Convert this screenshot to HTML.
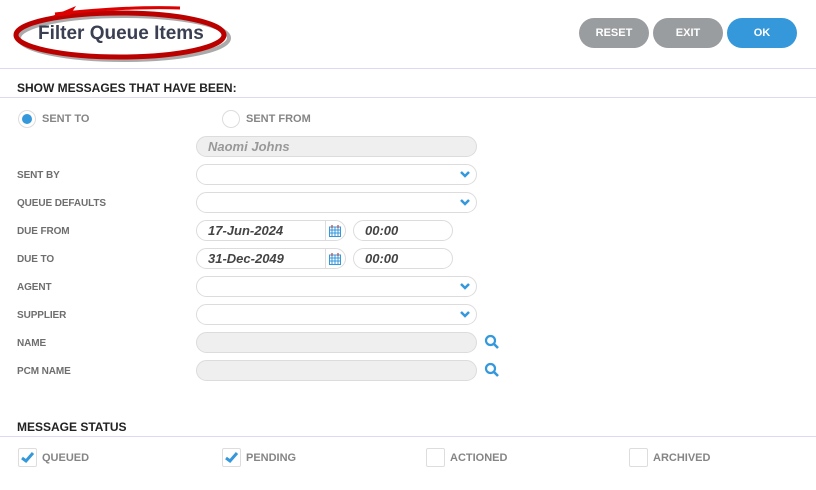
<!DOCTYPE html>
<html><head><meta charset="utf-8"><style>
*{box-sizing:border-box;margin:0;padding:0}
body{width:816px;height:490px;background:#fff;font-family:"Liberation Sans",sans-serif;position:relative;overflow:hidden}
.a{position:absolute}
.lbl{position:absolute;left:17px;font-size:10px;font-weight:bold;color:#6e6e6e;letter-spacing:-0.1px}
.fld{position:absolute;left:196px;width:281px;height:21px;border:1px solid #dcdcdc;border-radius:11px;background:#fff}
.gray{background:#efefef}
.chev{position:absolute;right:6px;top:4px}
.btn{position:absolute;top:18px;height:30px;border-radius:15px;color:#fff;font-size:11px;font-weight:bold;text-align:center;line-height:30px}
.hdr{position:absolute;left:17px;font-size:12px;font-weight:bold;color:#222}
.hl{position:absolute;left:0;width:816px;height:1px;background:#dcdaf0}
.cb{position:absolute;top:448px;width:19px;height:19px;border:1px solid #ddd;border-radius:2px}
.cbl{position:absolute;top:452px;font-size:11px;font-weight:bold;color:#858585}
.it{font-style:italic;font-weight:bold;font-size:13px;color:#444;position:absolute;top:2px;left:11px}
</style></head><body>
<svg class="a" style="left:0;top:0" width="240" height="70">
<ellipse cx="124" cy="38" rx="105" ry="22" fill="none" stroke="#aaa" stroke-width="4"/>
<ellipse cx="120" cy="35" rx="104" ry="22" fill="none" stroke="#b00" stroke-width="5"/>
<path d="M55 14 Q130 6 180 8" stroke="#d00" stroke-width="3" fill="none"/>
<path d="M50 17 L76 6 L70 15 Z" fill="#d00"/>
</svg>
<div class="a" style="left:38px;top:23px;font-size:19px;font-weight:bold;color:#3a3f52">Filter Queue Items</div>
<div class="btn" style="left:579px;width:70px;background:#9a9da0">RESET</div>
<div class="btn" style="left:653px;width:70px;background:#9a9da0">EXIT</div>
<div class="btn" style="left:727px;width:70px;background:#3498db">OK</div>
<div class="hl" style="top:68px"></div>
<div class="hdr" style="top:81px">SHOW MESSAGES THAT HAVE BEEN:</div>
<div class="hl" style="top:97px"></div>
<div class="a" style="left:18px;top:110px;width:18px;height:18px;border:1px solid #ddd;border-radius:50%"><div class="a" style="left:3px;top:3px;width:10px;height:10px;border-radius:50%;background:#3498db"></div></div>
<div class="cbl" style="left:42px;top:113px">SENT TO</div>
<div class="a" style="left:222px;top:110px;width:18px;height:18px;border:1px solid #ddd;border-radius:50%"></div>
<div class="cbl" style="left:246px;top:113px">SENT FROM</div>
<div class="fld gray" style="top:136px"><span class="it" style="color:#999">Naomi Johns</span></div>
<div class="lbl" style="top:170px">SENT BY</div>
<div class="fld" style="top:164px"><svg class="chev" width="10" height="10"><path d="M1 3 L5 7 L9 3" stroke="#3498db" stroke-width="2.5" fill="none"/></svg></div>
<div class="lbl" style="top:198px">QUEUE DEFAULTS</div>
<div class="fld" style="top:192px"><svg class="chev" width="10" height="10"><path d="M1 3 L5 7 L9 3" stroke="#3498db" stroke-width="2.5" fill="none"/></svg></div>
<div class="lbl" style="top:226px">DUE FROM</div>
<div class="fld" style="top:220px;width:150px"><span class="it">17-Jun-2024</span><div class="a" style="left:128px;top:0;width:1px;height:19px;background:#ddd"></div><svg class="a" style="left:132px;top:4px" width="12" height="12"><rect x="0.5" y="2" width="11" height="9.5" fill="#fff" stroke="#3498db"/><path d="M0 5h12M3 2v10M6 2v10M9 2v10M0 8h12" stroke="#3498db" stroke-width="1"/><path d="M3 0v3M9 0v3" stroke="#c55" stroke-width="1.4"/></svg></div>
<div class="fld" style="top:220px;left:353px;width:100px"><span class="it">00:00</span></div>
<div class="lbl" style="top:254px">DUE TO</div>
<div class="fld" style="top:248px;width:150px"><span class="it">31-Dec-2049</span><div class="a" style="left:128px;top:0;width:1px;height:19px;background:#ddd"></div><svg class="a" style="left:132px;top:4px" width="12" height="12"><rect x="0.5" y="2" width="11" height="9.5" fill="#fff" stroke="#3498db"/><path d="M0 5h12M3 2v10M6 2v10M9 2v10M0 8h12" stroke="#3498db" stroke-width="1"/><path d="M3 0v3M9 0v3" stroke="#c55" stroke-width="1.4"/></svg></div>
<div class="fld" style="top:248px;left:353px;width:100px"><span class="it">00:00</span></div>
<div class="lbl" style="top:282px">AGENT</div>
<div class="fld" style="top:276px"><svg class="chev" width="10" height="10"><path d="M1 3 L5 7 L9 3" stroke="#3498db" stroke-width="2.5" fill="none"/></svg></div>
<div class="lbl" style="top:310px">SUPPLIER</div>
<div class="fld" style="top:304px"><svg class="chev" width="10" height="10"><path d="M1 3 L5 7 L9 3" stroke="#3498db" stroke-width="2.5" fill="none"/></svg></div>
<div class="lbl" style="top:338px">NAME</div>
<div class="fld gray" style="top:332px"></div>
<svg class="a" style="left:484px;top:334px" width="16" height="16"><circle cx="6.5" cy="6.5" r="4.5" stroke="#3498db" stroke-width="2.2" fill="none"/><path d="M10 10 L14 14" stroke="#3498db" stroke-width="2.6"/></svg>
<div class="lbl" style="top:366px">PCM NAME</div>
<div class="fld gray" style="top:360px"></div>
<svg class="a" style="left:484px;top:362px" width="16" height="16"><circle cx="6.5" cy="6.5" r="4.5" stroke="#3498db" stroke-width="2.2" fill="none"/><path d="M10 10 L14 14" stroke="#3498db" stroke-width="2.6"/></svg>
<div class="hdr" style="top:420px">MESSAGE STATUS</div>
<div class="hl" style="top:436px"></div>
<div class="cb" style="left:18px"><svg width="17" height="17"><path d="M3 9 L7 12 L14 4" stroke="#3498db" stroke-width="3" fill="none"/></svg></div>
<div class="cbl" style="left:42px">QUEUED</div>
<div class="cb" style="left:222px"><svg width="17" height="17"><path d="M3 9 L7 12 L14 4" stroke="#3498db" stroke-width="3" fill="none"/></svg></div>
<div class="cbl" style="left:246px">PENDING</div>
<div class="cb" style="left:426px"></div>
<div class="cbl" style="left:450px">ACTIONED</div>
<div class="cb" style="left:629px"></div>
<div class="cbl" style="left:653px">ARCHIVED</div>
</body></html>
